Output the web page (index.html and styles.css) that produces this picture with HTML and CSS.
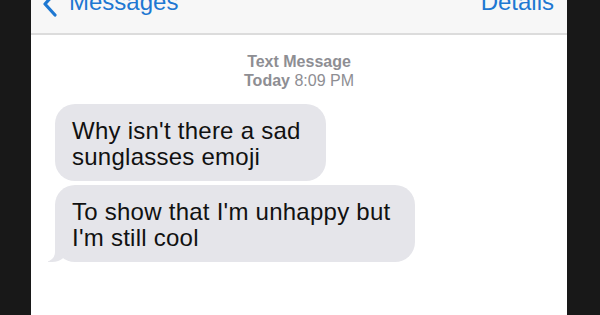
FILE: index.html
```html
<!DOCTYPE html>
<html lang="en">
<head>
  <meta charset="UTF-8" />
  <meta name="viewport" content="width=device-width, initial-scale=1.0"/>
  <title>Messages</title>
  <link rel="stylesheet" href="styles.css">
</head>
<body>
  <div class="phone">
    <div class="nav-bar">
      <div class="nav-back">
        <svg class="chevron" width="18" height="24" viewBox="0 0 18 24">
          <path d="M12 -7 L2 4 L12 15" fill="none" stroke="#1e78d2" stroke-width="3.2" stroke-linecap="round" stroke-linejoin="round"/>
        </svg>
        <span>Messages</span>
      </div>
      <div class="nav-details">Details</div>
    </div>

    <div class="thread">
      <div class="timestamp">
        <div>Text Message</div>
        <div><b>Today</b> 8:09 PM</div>
      </div>

      <div class="bubble">Why isn't there a sad<br>sunglasses emoji</div>
      <div class="bubble tail">To show that I'm unhappy but<br>I'm still cool</div>
    </div>
  </div>
</body>
</html>
```

FILE: styles.css
```css
body {
  margin: 0;
  background-color: #181818;
  font-family: "Liberation Sans", Arial, Helvetica, sans-serif;
  height: 315px;
  overflow: hidden;
}

.phone {
  width: 536px;
  height: 315px;
  margin-left: 31px;
  background-color: #ffffff;
  overflow: hidden;
}

.nav-bar {
  height: 33px;
  background-color: #f7f7f7;
  border-bottom: 2px solid #dcdcdc;
  display: flex;
  justify-content: space-between;
  align-items: flex-start;
  padding: 0 13px 0 12px;
  color: #1e78d2;
  font-size: 24px;
  line-height: 24px;
  overflow: hidden;
}

.nav-back {
  display: flex;
  align-items: flex-start;
  gap: 8px;
  margin-top: -10px;
}

.chevron {
  margin-top: 10px;
}

.nav-details {
  margin-top: -10px;
}

.thread {
  display: flex;
  flex-direction: column;
  align-items: flex-start;
  padding: 0 24px;
}

.timestamp {
  align-self: stretch;
  text-align: center;
  color: #8e8e93;
  font-size: 16px;
  font-weight: bold;
  line-height: 19px;
  margin-top: 17px;
  margin-bottom: 14px;
}

.timestamp b {
  font-weight: bold;
}

.timestamp div + div {
  font-weight: normal;
}

.bubble {
  position: relative;
  background-color: #e5e5ea;
  color: #111111;
  font-size: 24px;
  line-height: 26px;
  letter-spacing: 0.25px;
  padding: 14px 25px 11px 17px;
  border-radius: 20px;
  margin-bottom: 4px;
}

.bubble.tail::before {
  content: "";
  position: absolute;
  bottom: 0;
  left: -7px;
  width: 20px;
  height: 20px;
  background-color: #e5e5ea;
  border-bottom-right-radius: 16px 14px;
}

.bubble.tail::after {
  content: "";
  position: absolute;
  bottom: 0;
  left: -26px;
  width: 26px;
  height: 20px;
  background-color: #ffffff;
  border-bottom-right-radius: 10px;
}
```
